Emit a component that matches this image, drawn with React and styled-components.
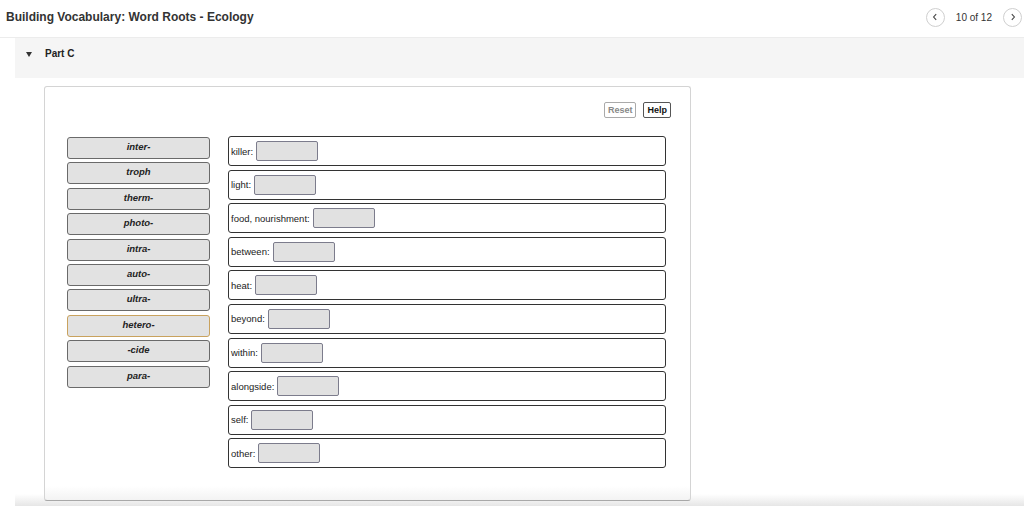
import React from "react";
import styled, { createGlobalStyle } from "styled-components";

const GlobalStyle = createGlobalStyle`
  html, body {
    margin: 0;
    padding: 0;
    background: #fff;
    font-family: "Liberation Sans", Arial, sans-serif;
    color: #222;
  }
`;

const roots = ["inter-", "troph", "therm-", "photo-", "intra-", "auto-", "ultra-", "hetero-", "-cide", "para-"];

const meanings = [
  "killer:",
  "light:",
  "food, nourishment:",
  "between:",
  "heat:",
  "beyond:",
  "within:",
  "alongside:",
  "self:",
  "other:",
];

const Page = styled.div`
  width: 1024px;
  height: 507px;
  overflow: hidden;
`;

const TopBar = styled.div`
  height: 38px;
  border-bottom: 1px solid #ececec;
  display: flex;
  align-items: center;
  justify-content: space-between;
  padding: 0 2px 3px 6px;
  box-sizing: border-box;
`;

const Title = styled.h1`
  margin: 0;
  font-size: 12px;
  font-weight: bold;
  color: #333;
`;

const Pager = styled.div`
  display: flex;
  align-items: center;
  gap: 11px;
  font-size: 10px;
  color: #333;
`;

const RoundBtn = styled.button`
  width: 19px;
  height: 19px;
  border-radius: 50%;
  border: 1px solid #cfcfcf;
  background: #fff;
  display: flex;
  align-items: center;
  justify-content: center;
  padding: 0;
  color: #555;
`;

const Section = styled.div`
  margin-left: 15px;
`;

const PartBar = styled.div`
  height: 40px;
  box-sizing: border-box;
  background: #f5f5f5;
  display: flex;
  align-items: flex-start;
  padding: 10px 0 0 11px;
  gap: 13px;
  font-size: 10px;
  font-weight: bold;
  color: #222;
`;

const Caret = styled.span`
  width: 0;
  height: 0;
  margin-top: 4px;
  border-left: 3.5px solid transparent;
  border-right: 3.5px solid transparent;
  border-top: 5px solid #333;
`;

const PartBody = styled.div`
  height: 428px;
  padding: 8px 0 0 29px;
  box-sizing: border-box;
  background: linear-gradient(to bottom, #fff calc(100% - 12px), #e6e6e6 100%);
`;

const Card = styled.div`
  width: 647px;
  height: 415px;
  box-sizing: border-box;
  border: 1px solid #d4d4d4;
  border-bottom-color: #a8a8a8;
  border-radius: 3px;
  background: linear-gradient(to bottom, #fff calc(100% - 14px), #f3f3f3 100%);
  padding: 15px 19px 0 22px;
`;

const Tools = styled.div`
  display: flex;
  justify-content: flex-end;
  gap: 7px;
  height: 16px;
`;

const ToolBtn = styled.button`
  height: 16px;
  padding: 0 3px;
  font-family: "Liberation Sans", Arial, sans-serif;
  font-size: 9px;
  font-weight: bold;
  background: #fff;
  border: 1px solid ${(p) => (p.$muted ? "#aaa" : "#555")};
  border-radius: 2px;
  color: ${(p) => (p.$muted ? "#888" : "#111")};
`;

const Board = styled.div`
  display: flex;
  gap: 18px;
  margin-top: 18px;
`;

const Bank = styled.div`
  width: 143px;
  display: flex;
  flex-direction: column;
  gap: 3.4px;
  padding-top: 1px;
`;

const Tile = styled.div`
  height: 22px;
  box-sizing: border-box;
  border: 1px solid ${(p) => (p.$focus ? "#c9a25e" : "#6a6a6a")};
  border-radius: 3px;
  background: #e2e2e2;
  display: flex;
  align-items: center;
  justify-content: center;
  font-size: 9.5px;
  font-weight: bold;
  font-style: italic;
  color: #222;
  padding-bottom: 3px;
`;

const Targets = styled.div`
  width: 438px;
  display: flex;
  flex-direction: column;
  gap: 3.6px;
`;

const Row = styled.div`
  height: 30px;
  box-sizing: border-box;
  border: 1px solid #333;
  border-radius: 3px;
  background: #fff;
  display: flex;
  align-items: center;
  padding-left: 2px;
  gap: 3px;
  font-size: 9.5px;
  color: #222;
`;

const Slot = styled.span`
  width: 62px;
  height: 20px;
  box-sizing: border-box;
  background: #e1e1e1;
  border: 1px solid #7c7c8c;
  border-radius: 2px;
`;

const Chevron = ({ dir }) => (
  <svg width="8" height="8" viewBox="0 0 8 8" fill="none" stroke="#444" strokeWidth="1.1">
    {dir === "left" ? <path d="M5.2 1.2 L2.6 4 L5.2 6.8" /> : <path d="M2.8 1.2 L5.4 4 L2.8 6.8" />}
  </svg>
);

export default function App() {
  return (
    <Page>
      <GlobalStyle />
      <TopBar>
        <Title>Building Vocabulary: Word Roots - Ecology</Title>
        <Pager>
          <RoundBtn aria-label="previous">
            <Chevron dir="left" />
          </RoundBtn>
          <span>10 of 12</span>
          <RoundBtn aria-label="next">
            <Chevron dir="right" />
          </RoundBtn>
        </Pager>
      </TopBar>
      <Section>
        <PartBar>
          <Caret />
          <span>Part C</span>
        </PartBar>
        <PartBody>
          <Card>
            <Tools>
              <ToolBtn $muted>Reset</ToolBtn>
              <ToolBtn>Help</ToolBtn>
            </Tools>
            <Board>
              <Bank>
                {roots.map((r) => (
                  <Tile key={r} $focus={r === "hetero-"}>
                    {r}
                  </Tile>
                ))}
              </Bank>
              <Targets>
                {meanings.map((m) => (
                  <Row key={m}>
                    <span>{m}</span>
                    <Slot />
                  </Row>
                ))}
              </Targets>
            </Board>
          </Card>
        </PartBody>
      </Section>
    </Page>
  );
}
